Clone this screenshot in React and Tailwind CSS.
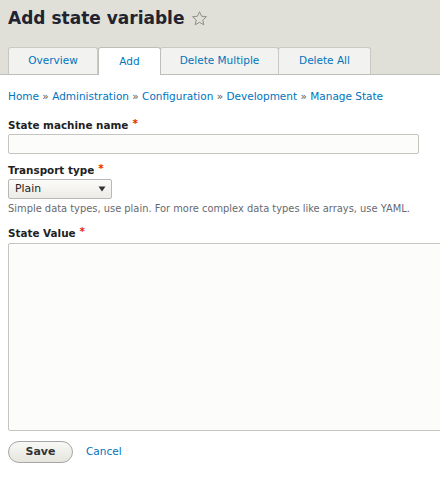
import React from "react";

const font = { fontFamily: '"DejaVu Sans", "Liberation Sans", sans-serif' };

function Star() {
  return (
    <svg width="17" height="17" viewBox="0 0 24 24" className="ml-[7px] mt-[1px]">
      <path
        d="M12 2.5l2.9 6.3 6.9.7-5.2 4.6 1.5 6.8L12 17.4l-6.1 3.5 1.5-6.8-5.2-4.6 6.9-.7z"
        fill="none"
        stroke="#8e8e8a"
        strokeWidth="1.4"
        strokeLinejoin="round"
      />
    </svg>
  );
}

function Req() {
  return <span className="ml-[4px] text-[#e32700] relative top-[-2px]">*</span>;
}

export default function App() {
  const tabs = [
    { label: "Overview", w: "w-[90px]" },
    { label: "Add", w: "w-[63px]", active: true },
    { label: "Delete Multiple", w: "w-[119px]" },
    { label: "Delete All", w: "w-[93px]" },
  ];
  return (
    <div className="w-full min-h-[489px] bg-white overflow-hidden" style={font}>
      <div className="bg-[#e0e0d8] border-b border-[#bfbfba] px-[8px]">
        <div className="flex items-center pt-[6px] h-[30px]">
          <h1 className="text-[17px] leading-[24px] font-bold text-[#222330]">Add state variable</h1>
          <Star />
        </div>
        <div className="flex mt-[17px] h-[27px]">
          {tabs.map((t, i) => (
            <div
              key={t.label}
              className={
                t.active
                  ? `${t.w} h-[28px] -mb-[1px] bg-white border border-b-0 border-[#bfbfba] rounded-t-[3px] flex items-center justify-center text-[10.5px] text-[#0074bd] relative z-10`
                  : `${t.w} h-[27px] bg-[#f2f2f0] border border-b-0 border-[#c8c8c4] rounded-t-[3px] flex items-center justify-center text-[10.5px] text-[#0074bd] ${i === 0 ? "" : "-ml-[1px]"}`
              }
            >
              {t.label}
            </div>
          ))}
        </div>
      </div>

      <div className="pl-[8px]">
        <div className="mt-[13px] leading-[16px] text-[10.5px] text-[#0074bd] whitespace-nowrap">
          Home <span className="text-[#555]">»</span> Administration <span className="text-[#555]">»</span> Configuration{" "}
          <span className="text-[#555]">»</span> Development <span className="text-[#555]">»</span> Manage State
        </div>

        <div className="mt-[13px] leading-[16px] text-[10.4px] font-bold text-[#222]">
          State machine name
          <Req />
        </div>
        <div className="mt-[1px] w-[411px] h-[20px] bg-[#fcfcfa] border border-[#c4c4c0] rounded-[2px]" />

        <div className="mt-[8px] leading-[16px] text-[10.4px] font-bold text-[#222]">
          Transport type
          <Req />
        </div>
        <div className="mt-[1px] w-[104px] h-[20px] border border-[#b8b8b4] rounded-[2px] bg-gradient-to-b from-[#fbfbf9] to-[#ecebe6] flex items-center justify-between pl-[6px] pr-[5px]">
          <span className="text-[10.8px] text-[#222]">Plain</span>
          <svg width="8" height="6" viewBox="0 0 8 6">
            <path d="M0.5 0.5h7L4 5.5z" fill="#333" />
          </svg>
        </div>
        <div className="mt-[3px] leading-[14px] text-[9.9px] text-[#68696f] whitespace-nowrap">
          Simple data types, use plain. For more complex data types like arrays, use YAML.
        </div>

        <div className="mt-[9px] leading-[16px] text-[10.4px] font-bold text-[#222]">
          State Value
          <Req />
        </div>
        <div className="mt-[2px] w-[470px] h-[188px] bg-[#fcfcfa] border border-[#c4c4c0] rounded-[2px]" />

        <div className="mt-[10px] flex items-center">
          <div className="w-[65px] h-[22px] rounded-full border border-[#a6a6a6] bg-gradient-to-b from-[#f8f8f6] to-[#e6e6de] flex items-center justify-center text-[11px] font-bold text-[#333]">
            Save
          </div>
          <span className="ml-[13px] text-[10.5px] text-[#0074bd]">Cancel</span>
        </div>
      </div>
    </div>
  );
}
